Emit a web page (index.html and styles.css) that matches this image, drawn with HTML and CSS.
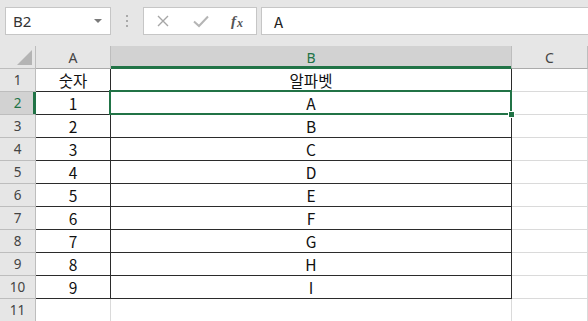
FILE: index.html
```html
<!DOCTYPE html>
<html lang="ko">
<head>
<meta charset="utf-8">
<link rel="stylesheet" href="styles.css">
</head>
<body>
<div class="app">
  <div class="toolbar">
    <div class="namebox">
      <span class="ref">B2</span>
      <span class="caret"></span>
    </div>
    <div class="grip"><i></i><i></i><i></i></div>
    <div class="fxbox">
      <svg class="ico" width="16" height="16" viewBox="0 0 16 16"><path d="M3 3 L13 13 M13 3 L3 13" stroke="#a6a6a6" stroke-width="1.4" fill="none"/></svg>
      <svg class="ico" width="18" height="16" viewBox="0 0 18 16"><path d="M2 8.5 L7 13 L16 3.5" stroke="#b5b5b5" stroke-width="2" fill="none"/></svg>
      <span class="fx">f<span class="x">x</span></span>
    </div>
    <div class="formula">A</div>
  </div>
  <div class="sheet">
    <div class="h corner"><span class="tri"></span></div>
    <div class="h col">A</div>
    <div class="h col sel">B</div>
    <div class="h col">C</div>
    <div class="h col end"></div>

    <div class="h row">1</div><div class="c d">숫자</div><div class="c d">알파벳</div><div class="c"></div><div class="c end"></div>
    <div class="h row sel">2</div><div class="c d">1</div><div class="c d active">A<span class="selbox"></span><span class="handle"></span></div><div class="c"></div><div class="c end"></div>
    <div class="h row">3</div><div class="c d">2</div><div class="c d">B</div><div class="c"></div><div class="c end"></div>
    <div class="h row">4</div><div class="c d">3</div><div class="c d">C</div><div class="c"></div><div class="c end"></div>
    <div class="h row">5</div><div class="c d">4</div><div class="c d">D</div><div class="c"></div><div class="c end"></div>
    <div class="h row">6</div><div class="c d">5</div><div class="c d">E</div><div class="c"></div><div class="c end"></div>
    <div class="h row">7</div><div class="c d">6</div><div class="c d">F</div><div class="c"></div><div class="c end"></div>
    <div class="h row">8</div><div class="c d">7</div><div class="c d">G</div><div class="c"></div><div class="c end"></div>
    <div class="h row">9</div><div class="c d">8</div><div class="c d">H</div><div class="c"></div><div class="c end"></div>
    <div class="h row">10</div><div class="c d">9</div><div class="c d">I</div><div class="c"></div><div class="c end"></div>
    <div class="h row">11</div><div class="c"></div><div class="c"></div><div class="c"></div><div class="c end"></div>
  </div>
</div>
</body>
</html>
```

FILE: styles.css
```css
* { box-sizing: border-box; }
html, body { margin: 0; padding: 0; }
body {
  width: 588px;
  height: 321px;
  overflow: hidden;
  background: #e6e6e6;
  font-family: "Noto Sans", "Liberation Sans", sans-serif;
}
.app { width: 588px; }

.toolbar {
  height: 46px;
  display: flex;
  align-items: flex-start;
  padding: 7px 0 0 5px;
  background: #e6e6e6;
}
.namebox {
  width: 106px;
  height: 28px;
  background: #fff;
  border: 1px solid #c6c6c6;
  display: flex;
  align-items: center;
  justify-content: space-between;
  padding: 0 8px 0 7px;
}
.ref {
  font-size: 15px;
  color: #333;
  font-family: "Noto Sans", "Liberation Sans", sans-serif;
}
.caret {
  width: 0;
  height: 0;
  border-left: 4px solid transparent;
  border-right: 4px solid transparent;
  border-top: 4px solid #7a7a7a;
}
.grip {
  width: 32px;
  height: 28px;
  display: flex;
  flex-direction: column;
  align-items: center;
  justify-content: center;
  gap: 3px;
}
.grip i {
  display: block;
  width: 2px;
  height: 2px;
  background: #a9a9a9;
}
.fxbox {
  width: 114px;
  height: 28px;
  background: #fff;
  border: 1px solid #c6c6c6;
  display: flex;
  align-items: center;
  padding: 0 0 0 11px;
  gap: 21px;
}
.ico { display: block; }
.fx {
  font-family: "Liberation Serif", serif;
  font-style: italic;
  font-weight: bold;
  font-size: 15px;
  color: #555;
  margin-left: 0;
  line-height: 1;
}
.fx .x {
  font-size: 12px;
  position: relative;
  top: 1px;
  margin-left: 1px;
}
.formula {
  flex: 1;
  height: 28px;
  margin-left: 4px;
  background: #fff;
  border: 1px solid #c6c6c6;
  border-right: none;
  display: flex;
  align-items: center;
  padding-left: 12px;
  font-family: "Noto Sans CJK KR", "Noto Sans", sans-serif;
  font-size: 15px;
  color: #222;
}

.sheet {
  display: grid;
  grid-template-columns: 36px 75px 401px 76px 1px;
  grid-template-rows: 23px repeat(11, 23px);
  background: #fff;
}
.h {
  background: #e6e6e6;
  color: #444;
  font-family: "Noto Sans", "Liberation Sans", sans-serif;
  font-size: 14px;
  display: flex;
  align-items: center;
  justify-content: center;
  border-right: 1px solid #bdbdbd;
  border-bottom: 1px solid #bdbdbd;
}
.h.row { font-size: 13.5px; }
.h.col { border-bottom: 1px solid #ababab; }
.h.sel {
  background: #d2d2d2;
  color: #217346;
}
.h.col.sel { box-shadow: inset 0 -2px 0 #217346; border-bottom-color: #217346; }
.h.row.sel { box-shadow: inset -2px 0 0 #217346; border-right-color: #217346; }
.h.end { border-right: none; }
.corner { position: relative; }
.tri {
  position: absolute;
  right: 3px;
  bottom: 3px;
  width: 0;
  height: 0;
  border-left: 15px solid transparent;
  border-bottom: 15px solid #b4b4b4;
}

.c {
  border-right: 1px solid #dadada;
  border-bottom: 1px solid #dadada;
  display: flex;
  align-items: center;
  justify-content: center;
  font-family: "Noto Sans CJK KR", "Noto Sans", sans-serif;
  font-size: 15.5px;
  color: #111;
  line-height: 1;
  padding-top: 1px;
}
.c.end { border-right: none; }
.c.d {
  border-right-color: #2b2b2b;
  border-bottom-color: #2b2b2b;
}
.active { position: relative; }
.selbox {
  position: absolute;
  left: -2px;
  top: -2px;
  right: -1px;
  bottom: -1px;
  border: 2px solid #217346;
  pointer-events: none;
}
.handle {
  position: absolute;
  right: -4px;
  bottom: -4px;
  width: 7px;
  height: 7px;
  background: #217346;
  border: 1px solid #fff;
}
```
